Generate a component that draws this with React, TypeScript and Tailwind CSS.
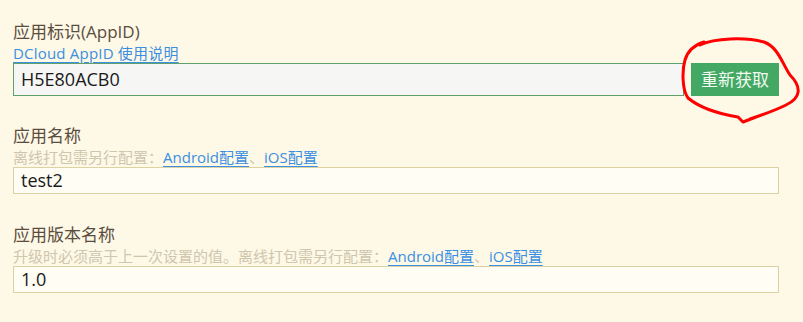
import React from 'react';

const font = { fontFamily: '"Open Sans", "Noto Sans CJK SC", sans-serif' };

const HintLinks: React.FC = () => (
    <>
        <a className="text-[#3a8fe2] underline underline-offset-[3px]" href="#">Android配置</a>
        <span className="text-[#cfc6ae]">、</span>
        <a className="text-[#3a8fe2] underline underline-offset-[3px]" href="#">iOS配置</a>
    </>
);

export default function App() {
    return (
        <div className="w-[803px] h-[322px] bg-[#fef8e6] overflow-hidden relative" style={font}>
            <div className="pl-[13px] pt-[20px] w-[779px]">
                {/* AppID */}
                <div className="h-[24px] leading-[24px] text-[17px] text-[#5a4d3e]">应用标识(AppID)</div>
                <div className="h-[19px] leading-[19px] text-[15px]">
                    <a className="text-[#3a8fe2] underline underline-offset-[3px] tracking-[0.2px]" href="#">DCloud AppID 使用说明</a>
                </div>
                <div className="flex gap-[7px]">
                    <div className="flex-1 h-[33px] border border-[#5fa06b] bg-[#f6f6f5] flex items-center pl-[7px] text-[18px] text-[#1a1a1a]">
                        H5E80ACB0
                    </div>
                    <button className="w-[88px] h-[33px] bg-[#42a863] text-[#f2faf2] text-[17px] leading-none">
                        重新获取
                    </button>
                </div>

                {/* 应用名称 */}
                <div className="mt-[28px] h-[24px] leading-[24px] text-[17px] text-[#5a4d3e]">应用名称</div>
                <div className="h-[19px] leading-[19px] text-[15px] text-[#cfc6ae]">
                    离线打包需另行配置：<HintLinks />
                </div>
                <div className="h-[27px] border border-[#dcd2a4] bg-[#fffdf4] flex items-center pl-[7px] text-[18px] text-[#1a1a1a]">
                    test2
                </div>

                {/* 应用版本名称 */}
                <div className="mt-[29px] h-[24px] leading-[24px] text-[17px] text-[#5a4d3e]">应用版本名称</div>
                <div className="h-[19px] leading-[19px] text-[15px] text-[#cfc6ae]">
                    升级时必须高于上一次设置的值。离线打包需另行配置：<HintLinks />
                </div>
                <div className="h-[27px] border border-[#dcd2a4] bg-[#fffdf4] flex items-center pl-[7px] text-[18px] text-[#1a1a1a]">
                    1.0
                </div>
            </div>

            {/* hand-drawn red circle around the button */}
            <svg className="absolute left-[680px] top-[35px]" width="123" height="90" viewBox="0 0 123 90" fill="none">
                <path
                    d="M20 10 C35 3, 65 2, 84 7 C98 12, 102 28, 110 40 C122 52, 121 63, 106 70 C94 76, 82 80, 70 84 M76 82 L63 87 L58 82 C40 79, 20 73, 8 63 C2 55, 2 35, 5 25 C8 15, 14 10, 24 7"
                    stroke="#ff0000"
                    strokeWidth="3"
                    strokeLinecap="round"
                    strokeLinejoin="round"
                />
            </svg>
        </div>
    );
}
